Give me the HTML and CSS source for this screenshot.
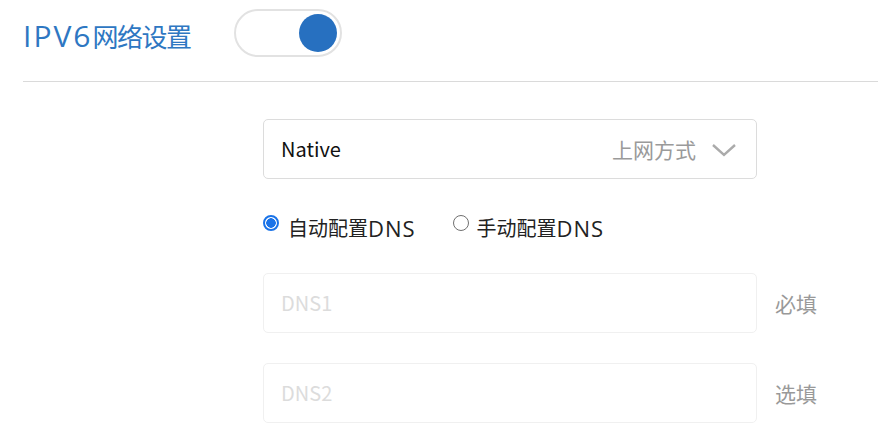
FILE: index.html
```html
<!DOCTYPE html>
<html lang="zh-CN">
<head>
<meta charset="utf-8">
<link rel="stylesheet" href="styles.css">
</head>
<body>
<div class="header">
  <h1 class="title"><span class="lat">IPV6</span>网络设置</h1>
  <div class="toggle"><span class="knob"></span></div>
</div>
<div class="form">
  <div class="select">
    <span class="value">Native</span>
    <span class="label">上网方式</span>
    <svg class="chev" width="26" height="14" viewBox="0 0 26 14"><polyline points="2,2 13,12 24,2" fill="none" stroke="#ababab" stroke-width="2.4"/></svg>
  </div>
  <div class="radios">
    <label class="radio"><span class="dot checked"></span>自动配置<span class="lat">DNS</span></label>
    <label class="radio"><span class="dot"></span>手动配置<span class="lat">DNS</span></label>
  </div>
  <div class="field">
    <div class="input">DNS1</div>
    <span class="hint">必填</span>
  </div>
  <div class="field">
    <div class="input">DNS2</div>
    <span class="hint">选填</span>
  </div>
</div>
</body>
</html>
```
FILE: styles.css
```css
html, body { margin: 0; padding: 0; background: #fff; }
body { font-family: "Noto Sans CJK SC", "Noto Sans", sans-serif; color: #222; }
.header {
  display: flex;
  align-items: center;
  margin-left: 23px;
  height: 68px;
  padding-bottom: 13px;
  border-bottom: 1px solid #dadada;
}
.title {
  margin: 4px 0 0 0;
  font-size: 26px;
  font-weight: 400;
  color: #2e77c2;
  line-height: 30px;
  letter-spacing: -1.5px;
  white-space: nowrap;
}
.title .lat {
  font-family: "Open Sans", sans-serif;
  font-size: 30px;
  letter-spacing: 2px;
}
.toggle {
  margin-left: 44px;
  width: 101px;
  height: 44px;
  border: 2px solid #e2e2e2;
  border-radius: 24px;
  display: flex;
  align-items: center;
  justify-content: flex-end;
  padding-right: 3px;
  box-sizing: content-box;
  margin-top: -2px;
}
.knob {
  width: 38px;
  height: 38px;
  border-radius: 50%;
  background: #2770c0;
}
.form { margin-left: 263px; width: 494px; padding-top: 37px; }
.select {
  height: 58px;
  border: 1px solid #dcdcdc;
  border-radius: 5px;
  display: flex;
  align-items: center;
  padding: 0 19px 0 17px;
}
.value { font-size: 20px; color: #111; flex: 1; line-height: 24px; }
.label { font-size: 21px; color: #9a9a9a; line-height: 24px; }
.chev { margin-left: 15px; margin-top: 2px; }
.radios {
  display: flex;
  gap: 37px;
  margin-top: 34px;
  height: 30px;
  align-items: center;
}
.radio {
  display: flex;
  align-items: center;
  font-size: 20px;
  line-height: 30px;
  color: #222;
}
.radio .lat {
  font-family: "Open Sans", sans-serif;
  font-size: 22px;
  letter-spacing: 1px;
}
.dot {
  width: 16px;
  height: 16px;
  border-radius: 50%;
  border: 1.5px solid #707070;
  margin-right: 8px;
  margin-top: -10px;
  box-sizing: border-box;
}
.dot.checked {
  border: 2px solid #1a73e8;
  background: radial-gradient(circle, #1a73e8 0 4.5px, #fff 5px);
  margin-right: 9px;
}
.field {
  display: flex;
  align-items: center;
  margin-top: 30px;
  width: 560px;
}
.input {
  height: 58px;
  flex: none;
  border: 1px solid #f0f0f0;
  border-radius: 5px;
  display: flex;
  align-items: center;
  padding-left: 17px;
  box-sizing: content-box;
  width: 475px;
  font-size: 20px;
  color: #dcdcdc;
  line-height: 24px;
}
.hint {
  margin-left: 18px;
  font-size: 21px;
  color: #999;
  line-height: 24px;
}
```
